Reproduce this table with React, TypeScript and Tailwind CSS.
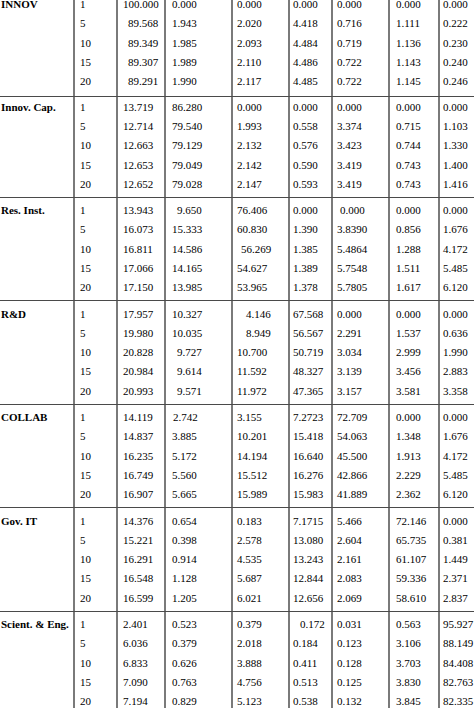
import React from 'react'

type Group = {
  label: string
  pt: string
  pb: string
  cols: string[][]
}

const horizons = ['1', '5', '10', '15', '20']

const groups: Group[] = [
  {
    label: 'INNOV', pt: 'pt-0', pb: 'pb-[5px]',
    cols: [
      ['100.000', '89.568', '89.349', '89.307', '89.291'],
      ['0.000', '1.943', '1.985', '1.989', '1.990'],
      ['0.000', '2.020', '2.093', '2.110', '2.117'],
      ['0.000', '4.418', '4.484', '4.486', '4.485'],
      ['0.000', '0.716', '0.719', '0.722', '0.722'],
      ['0.000', '1.111', '1.136', '1.143', '1.145'],
      ['0.000', '0.222', '0.230', '0.240', '0.246'],
    ],
  },
  {
    label: 'Innov. Cap.', pt: 'pt-0', pb: 'pb-[3px]',
    cols: [
      ['13.719', '12.714', '12.663', '12.653', '12.652'],
      ['86.280', '79.540', '79.129', '79.049', '79.028'],
      ['0.000', '1.993', '2.132', '2.142', '2.147'],
      ['0.000', '0.558', '0.576', '0.590', '0.593'],
      ['0.000', '3.374', '3.423', '3.419', '3.419'],
      ['0.000', '0.715', '0.744', '0.743', '0.743'],
      ['0.000', '1.103', '1.330', '1.400', '1.416'],
    ],
  },
  {
    label: 'Res. Inst.', pt: 'pt-[3px]', pb: 'pb-[3px]',
    cols: [
      ['13.943', '16.073', '16.811', '17.066', '17.150'],
      ['9.650', '15.333', '14.586', '14.165', '13.985'],
      ['76.406', '60.830', '56.269', '54.627', '53.965'],
      ['0.000', '1.390', '1.385', '1.389', '1.378'],
      ['0.000', '3.8390', '5.4864', '5.7548', '5.7805'],
      ['0.000', '0.856', '1.288', '1.511', '1.617'],
      ['0.000', '1.676', '4.172', '5.485', '6.120'],
    ],
  },
  {
    label: 'R&D', pt: 'pt-[3px]', pb: 'pb-[3px]',
    cols: [
      ['17.957', '19.980', '20.828', '20.984', '20.993'],
      ['10.327', '10.035', '9.727', '9.614', '9.571'],
      ['4.146', '8.949', '10.700', '11.592', '11.972'],
      ['67.568', '56.567', '50.719', '48.327', '47.365'],
      ['0.000', '2.291', '3.034', '3.139', '3.157'],
      ['0.000', '1.537', '2.999', '3.456', '3.581'],
      ['0.000', '0.636', '1.990', '2.883', '3.358'],
    ],
  },
  {
    label: 'COLLAB', pt: 'pt-[3px]', pb: 'pb-[3px]',
    cols: [
      ['14.119', '14.837', '16.235', '16.749', '16.907'],
      ['2.742', '3.885', '5.172', '5.560', '5.665'],
      ['3.155', '10.201', '14.194', '15.512', '15.989'],
      ['7.2723', '15.418', '16.640', '16.276', '15.983'],
      ['72.709', '54.063', '45.500', '42.866', '41.889'],
      ['0.000', '1.348', '1.913', '2.229', '2.362'],
      ['0.000', '1.676', '4.172', '5.485', '6.120'],
    ],
  },
  {
    label: 'Gov. IT', pt: 'pt-[3px]', pb: 'pb-[3px]',
    cols: [
      ['14.376', '15.221', '16.291', '16.548', '16.599'],
      ['0.654', '0.398', '0.914', '1.128', '1.205'],
      ['0.183', '2.578', '4.535', '5.687', '6.021'],
      ['7.1715', '13.080', '13.243', '12.844', '12.656'],
      ['5.466', '2.604', '2.161', '2.083', '2.069'],
      ['72.146', '65.735', '61.107', '59.336', '58.610'],
      ['0.000', '0.381', '1.449', '2.371', '2.837'],
    ],
  },
  {
    label: 'Scient. & Eng.', pt: 'pt-[3px]', pb: 'pb-[3px]',
    cols: [
      ['2.401', '6.036', '6.833', '7.090', '7.194'],
      ['0.523', '0.379', '0.626', '0.763', '0.829'],
      ['0.379', '2.018', '3.888', '4.756', '5.123'],
      ['0.172', '0.184', '0.411', '0.513', '0.538'],
      ['0.031', '0.123', '0.128', '0.125', '0.132'],
      ['0.563', '3.106', '3.703', '3.830', '3.845'],
      ['95.927', '88.149', '84.408', '82.763', '82.335'],
    ],
  },
]

// column boxes: width + text inset after the 2px rule
const colCls = [
  'w-[43px] pl-[5px]',
  'w-[48px] pl-[5px]',
  'w-[67px] pl-[6px]',
  'w-[57px] pl-[4px]',
  'w-[43px] pl-[3px]',
  'w-[57px] pl-[4px]',
  'w-[50px] pl-[6px]',
  'w-[80px] pl-[3px]',
]

// the source table is not aligned consistently; a few cells sit further in
// key: group-col-row (col 1 = first value column after the horizon)
const indent: Record<string, string> = {
  '0-1-1': 'pl-[5px]', '0-1-2': 'pl-[5px]', '0-1-3': 'pl-[5px]', '0-1-4': 'pl-[5px]',
  '2-2-0': 'pl-[5px]', '2-3-2': 'pl-[4px]', '2-5-0': 'pl-[3px]',
  '3-2-2': 'pl-[5px]', '3-2-3': 'pl-[5px]', '3-2-4': 'pl-[5px]',
  '3-3-0': 'pl-[9px]', '3-3-1': 'pl-[9px]',
  '4-2-0': 'pl-[1px]',
  '6-4-0': 'pl-[7px]',
}

function Cell({ v, extra }: { v: string; extra?: string }) {
  return (
    <div className={`h-[19.3px] flex items-center whitespace-nowrap ${extra ?? ''}`}>
      {v}
    </div>
  )
}

function GroupBlock({ g, gi }: { g: Group; gi: number }) {
  const columns = [horizons, ...g.cols]
  return (
    <div className={`flex ${gi > 0 ? 'border-t border-[#4a4a4a]' : ''}`}>
      <div className={`w-[73px] shrink-0 pl-[1px] font-bold ${g.pt} ${g.pb}`}>
        <Cell v={g.label} />
      </div>
      {columns.map((col, ci) => (
        <div
          key={ci}
          className={`shrink-0 border-l-2 border-[#7a7a7a] ${colCls[ci]} ${g.pt} ${g.pb}`}
        >
          {col.map((v, ri) => (
            <Cell key={ri} v={v} extra={indent[`${gi}-${ci}-${ri}`]} />
          ))}
        </div>
      ))}
    </div>
  )
}

export default function App() {
  return (
    <div className="w-[474px] h-[708px] overflow-hidden bg-white text-black">
      <div
        className="-mt-[5px] w-[560px] text-[11px] leading-none"
        style={{ fontFamily: '"Liberation Serif", "Times New Roman", serif' }}
      >
        {groups.map((g, gi) => (
          <GroupBlock key={gi} g={g} gi={gi} />
        ))}
      </div>
    </div>
  )
}
